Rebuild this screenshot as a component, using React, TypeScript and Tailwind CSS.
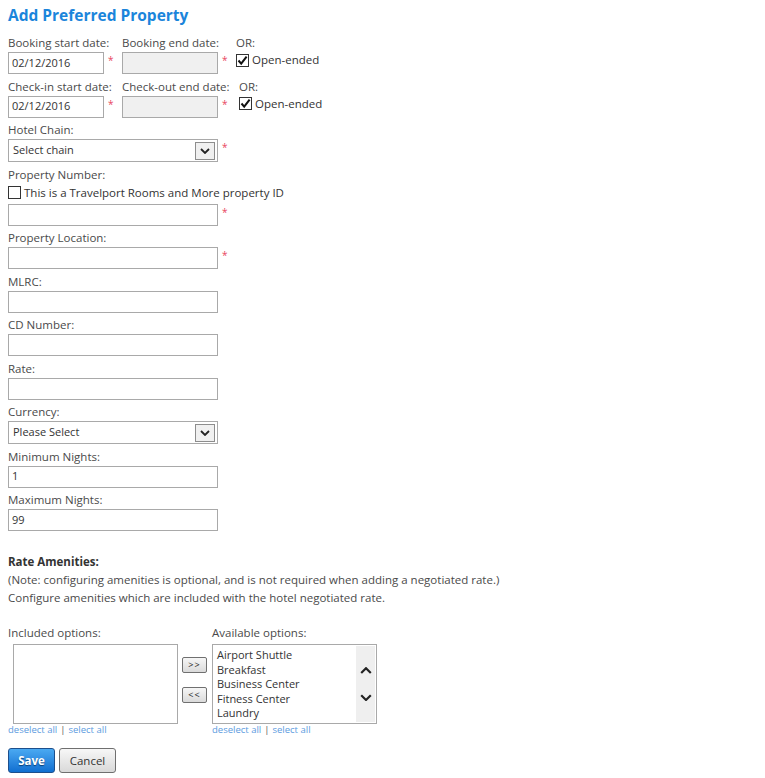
import React from 'react';

const FONT = { fontFamily: '"Open Sans", "Noto Sans", Arial, sans-serif' };

function Req() {
  return <span className="ml-[4px] self-start mt-[3px] text-[10px] leading-[10px] text-[#e8455e]">*</span>;
}

function Check({ checked }: { checked?: boolean }) {
  return (
    <span className="inline-flex h-[13px] w-[13px] items-center justify-center border border-[#333] bg-white">
      {checked && (
        <svg width="11" height="11" viewBox="0 0 11 11">
          <path d="M1.5 5.5 L4.2 8.6 L9.6 1.6" fill="none" stroke="#111" strokeWidth="2" />
        </svg>
      )}
    </span>
  );
}

function Chevron({ dir = 'down', size = 10 }: { dir?: 'down' | 'up'; size?: number }) {
  return (
    <svg width={size} height={size * 0.6} viewBox="0 0 10 6">
      <path
        d={dir === 'down' ? 'M1 1 L5 5 L9 1' : 'M1 5 L5 1 L9 5'}
        fill="none"
        stroke="#222"
        strokeWidth="1.8"
      />
    </svg>
  );
}

function Label({ children }: { children: React.ReactNode }) {
  return <div className="h-[18px] flex items-center text-[11.5px] text-[#4a4a4a]">{children}</div>;
}

function TextBox({ value = '', w = 'w-[210px]', disabled }: { value?: string; w?: string; disabled?: boolean }) {
  return (
    <div
      className={`${w} h-[22px] flex items-center px-[3px] border border-[#a9a9a9] text-[11px] text-[#333] ${
        disabled ? 'bg-[#f0f0f0]' : 'bg-white'
      }`}
    >
      {value}
    </div>
  );
}

function SelectBox({ text }: { text: string }) {
  return (
    <div className="w-[210px] h-[23px] flex items-center justify-between pl-[4px] pr-[2px] border border-[#a9a9a9] bg-white text-[11px] text-[#333]">
      <span>{text}</span>
      <span className="h-[18px] w-[20px] flex items-center justify-center border border-[#8d8d8d] bg-[#f0f0f0]">
        <Chevron />
      </span>
    </div>
  );
}

function Field({ label, children, req }: { label: string; children: React.ReactNode; req?: boolean }) {
  return (
    <div className="mb-[3.5px]">
      <Label>{label}</Label>
      <div className="flex items-start">
        {children}
        {req && <Req />}
      </div>
    </div>
  );
}

const AMENITIES = ['Airport Shuttle', 'Breakfast', 'Business Center', 'Fitness Center', 'Laundry'];

function Links() {
  return (
    <div className="h-[12px] flex items-center text-[9.5px] text-[#5b9be0]">
      <span>deselect all</span>
      <span className="mx-[3px] text-[#555]">|</span>
      <span>select all</span>
    </div>
  );
}

export default function App() {
  return (
    <div className="w-[765px] min-h-[778px] bg-white px-[8px]" style={FONT}>
      <h1 className="h-[34px] pt-[5px] text-[15.5px] leading-[20px] font-bold text-[#1b85db]">Add Preferred Property</h1>

      {/* date rows */}
      {[
        ['Booking start date:', 'Booking end date:', 'w-[114px]'],
        ['Check-in start date:', 'Check-out end date:', 'w-[117px]'],
      ].map(([a, b, orW], i) => (
        <div key={i} className="mb-[3.5px]">
          <div className="flex h-[18px] items-center text-[11.5px] text-[#4a4a4a]">
            <span className="w-[114px]">{a}</span>
            <span className={orW}>{b}</span>
            <span>OR:</span>
          </div>
          <div className="flex items-start">
            <TextBox value="02/12/2016" w="w-[96px]" />
            <span className="w-[18px] flex"><Req /></span>
            <TextBox w="w-[96px]" disabled />
            <span className={i === 0 ? 'w-[18px] flex' : 'w-[21px] flex'}><Req /></span>
            <div className="flex items-center gap-[3px] h-[16px] text-[11.5px] text-[#333]">
              <Check checked />
              <span>Open-ended</span>
            </div>
          </div>
        </div>
      ))}

      <Field label="Hotel Chain:" req>
        <SelectBox text="Select chain" />
      </Field>

      <div className="mb-[3.5px]">
        <Label>Property Number:</Label>
        <div className="h-[20px] flex items-start pt-[2px] gap-[3px] text-[11.5px] leading-[14px] text-[#333]">
          <Check />
          <span>This is a Travelport Rooms and More property ID</span>
        </div>
        <div className="flex items-start">
          <TextBox />
          <Req />
        </div>
      </div>

      <Field label="Property Location:" req>
        <TextBox />
      </Field>
      <Field label="MLRC:">
        <TextBox />
      </Field>
      <Field label="CD Number:">
        <TextBox />
      </Field>
      <Field label="Rate:">
        <TextBox />
      </Field>
      <Field label="Currency:">
        <SelectBox text="Please Select" />
      </Field>
      <Field label="Minimum Nights:">
        <TextBox value="1" />
      </Field>
      <Field label="Maximum Nights:">
        <TextBox value="99" />
      </Field>

      <div className="mt-[22px] text-[11.5px] leading-[18px] text-[#4a4a4a]">
        <div className="font-bold text-[#333]">Rate Amenities:</div>
        <div>(Note: configuring amenities is optional, and is not required when adding a negotiated rate.)</div>
        <div>Configure amenities which are included with the hotel negotiated rate.</div>
      </div>

      <div className="mt-[17px] flex">
        <div className="w-[174px]">
          <Label>Included options:</Label>
          <div className="mt-[2px] ml-[5px] w-[165px] h-[80px] border border-[#a9a9a9] bg-white" />
          <Links />
        </div>
        <div className="w-[30px] pt-[33px] flex flex-col gap-[14px]">
          {['>>', '<<'].map((t) => (
            <span
              key={t}
              className="w-[25px] h-[16px] flex items-center justify-center rounded-[2px] border border-[#707070] bg-gradient-to-b from-[#f6f6f6] to-[#dadada] text-[9px] tracking-[1px] text-[#222]"
            >
              {t}
            </span>
          ))}
        </div>
        <div>
          <Label>Available options:</Label>
          <div className="mt-[2px] w-[165px] h-[80px] flex border border-[#a9a9a9] bg-white">
            <ul className="flex-1 pl-[4px] pt-[3px] text-[11px] leading-[14.5px] text-[#333]">
              {AMENITIES.map((a) => (
                <li key={a}>{a}</li>
              ))}
            </ul>
            <div className="my-[1px] mr-[1px] w-[19px] flex flex-col items-center justify-center gap-[19px] bg-[#efefef]">
              <Chevron dir="up" size={12} />
              <Chevron dir="down" size={12} />
            </div>
          </div>
          <Links />
        </div>
      </div>

      <div className="mt-[12px] flex gap-[4px]">
        <button className="w-[47px] h-[25px] rounded-[3px] border border-[#1d4f8c] bg-gradient-to-b from-[#4aa9f2] to-[#0f6fd0] text-[11.5px] font-bold text-white [text-shadow:0_1px_1px_#0a3f78]">
          Save
        </button>
        <button className="w-[57px] h-[25px] rounded-[3px] border border-[#6f6f6f] bg-gradient-to-b from-[#f7f7f7] to-[#d9d9d9] text-[11.5px] text-[#333]">
          Cancel
        </button>
      </div>
    </div>
  );
}
